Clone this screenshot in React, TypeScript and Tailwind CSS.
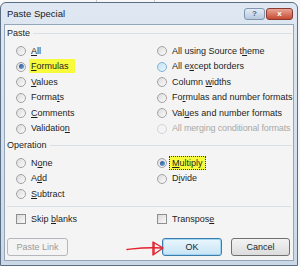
import type { ReactNode } from "react";

type Opt = {
    label: ReactNode;
    checked?: boolean;
    disabled?: boolean;
    hover?: boolean;
};

function Radio({ checked, disabled, hover }: { checked?: boolean; disabled?: boolean; hover?: boolean }) {
    const ring = disabled
        ? "border-[#d4d4d4] from-[#f4f4f4] to-[#f4f4f4]"
        : hover
          ? "border-[#7fb2d6] from-[#c4e2f5] to-[#eaf6fd]"
          : "border-[#a3a3a3] from-[#dcdcdc] to-[#fbfbfb]";
    return (
        <span
            className={`flex h-[10px] w-[10px] shrink-0 items-center justify-center rounded-full border bg-gradient-to-br ${ring}`}
        >
            {checked && (
                <span className="h-[5px] w-[5px] rounded-full bg-gradient-to-br from-[#1d4f8c] to-[#78aee2]" />
            )}
        </span>
    );
}

function Check() {
    return (
        <span className="h-[10px] w-[10px] shrink-0 border border-[#8f8f8f] bg-gradient-to-br from-[#d9d9d9] to-[#fafafa]" />
    );
}

function Row({ label, checked, disabled, hover }: Opt) {
    return (
        <div className="flex h-[15.5px] items-center gap-[5px] whitespace-nowrap">
            <Radio checked={checked} disabled={disabled} hover={hover} />
            <span className={disabled ? "tracking-[-0.15px] text-[#a9a9a9]" : "text-[#1e1e1e]"}>{label}</span>
        </div>
    );
}

function Header({ title }: { title: string }) {
    return (
        <div className="flex h-[14px] items-center gap-[3px] pl-[2px] pr-[1px]">
            <span className="text-[#1e1e1e]">{title}</span>
            <span className="h-px flex-1 bg-[#dadfe3]" />
        </div>
    );
}

const pasteLeft: Opt[] = [
    { label: <><u>A</u>ll</> },
    {
        label: (
            <span className="-ml-[2px] bg-[#f7fb3c] py-[2px] pl-[2px] pr-[6px]">
                <u>F</u>ormulas
            </span>
        ),
        checked: true,
    },
    { label: <><u>V</u>alues</> },
    { label: <>Forma<u>t</u>s</> },
    { label: <><u>C</u>omments</> },
    { label: <>Validatio<u>n</u></> },
];

const pasteRight: Opt[] = [
    { label: <>All using Source t<u>h</u>eme</> },
    { label: <>All e<u>x</u>cept borders</>, hover: true },
    { label: <>Column <u>w</u>idths</> },
    { label: <>Fo<u>r</u>mulas and number formats</> },
    { label: <>Val<u>u</u>es and number formats</> },
    { label: <>All mer<u>g</u>ing conditional formats</>, disabled: true },
];

const opLeft: Opt[] = [
    { label: <>N<u>o</u>ne</> },
    { label: <>A<u>d</u>d</> },
    { label: <><u>S</u>ubtract</> },
];

const opRight: Opt[] = [
    {
        label: (
            <span className="-ml-[3px] border border-dotted border-[#333] bg-[#f7fb3c] px-[2px] py-px">
                <u>M</u>ultiply
            </span>
        ),
        checked: true,
    },
    { label: <>D<u>i</u>vide</> },
];

export default function App() {
    return (
        <div className="relative h-[266px] w-[300px] overflow-hidden bg-[#f7f7f7] font-['Liberation_Sans',Arial,sans-serif] text-[9px] leading-none">
            {/* sheet behind the dialog */}
            <div className="flex h-[2px]">
                <div className="w-[97px] border-r border-[#c8c8c8]" />
                <div className="w-[58px] border-r border-[#c8c8c8]" />
            </div>

            <div className="flex h-[264px] w-[298px] flex-col rounded-t-[6px] border border-[#5b6e84] bg-gradient-to-b from-[#dfe8f2] to-[#cbd9e7]">
                {/* title bar */}
                <div className="flex h-[21px] shrink-0 items-center pl-[6px] pr-[4px]">
                    <span className="text-[9.5px] text-[#1b1b1b]">Paste Special</span>
                    <div className="ml-auto flex gap-[1px]">
                        <div className="flex h-[12px] w-[21px] items-center justify-center rounded-[3px] border border-[#8096ae] bg-gradient-to-b from-[#e3ecf6] to-[#b7c9dd] text-[8px] font-bold text-[#52687f]">
                            ?
                        </div>
                        <div className="flex h-[12px] w-[27px] items-center justify-center rounded-[3px] border border-[#8a3a32] bg-gradient-to-b from-[#e9a596] to-[#c4482f] text-[8px] font-bold text-white">
                            x
                        </div>
                    </div>
                </div>

                {/* client area */}
                <div className="mx-[3px] mb-[4px] flex flex-1 flex-col border border-[#93a6ba] bg-[#f4f4f4] pt-[1px]">
                    <Header title="Paste" />
                    <div className="mt-[3.25px] grid grid-cols-[141px_1fr] pl-[11px]">
                        <div>
                            {pasteLeft.map((o, i) => (
                                <Row key={i} {...o} />
                            ))}
                        </div>
                        <div>
                            {pasteRight.map((o, i) => (
                                <Row key={i} {...o} />
                            ))}
                        </div>
                    </div>

                    <div className="mt-[1.75px]">
                        <Header title="Operation" />
                    </div>
                    <div className="mt-[3.25px] grid grid-cols-[141px_1fr] pl-[11px]">
                        <div>
                            {opLeft.map((o, i) => (
                                <Row key={i} {...o} />
                            ))}
                        </div>
                        <div>
                            {opRight.map((o, i) => (
                                <Row key={i} {...o} />
                            ))}
                        </div>
                    </div>

                    <div className="mx-[2px] mt-[4px] h-px bg-[#dadfe3]" />

                    <div className="mt-[4.5px] grid grid-cols-[141px_1fr] pl-[11px]">
                        <div className="flex h-[15.5px] items-center gap-[5px]">
                            <Check />
                            <span className="text-[#1e1e1e]">
                                Skip <u>b</u>lanks
                            </span>
                        </div>
                        <div className="flex h-[15.5px] items-center gap-[5px]">
                            <Check />
                            <span className="text-[#1e1e1e]">
                                Transpos<u>e</u>
                            </span>
                        </div>
                    </div>

                    <div className="mt-[11.25px] flex pl-[2px] pr-[3px]">
                        <div className="flex h-[18px] w-[61px] items-center justify-center rounded-[3px] border border-[#b4b8bc] bg-[#f4f4f4] text-[#9a9a9a]">
                            Paste Link
                        </div>
                        <div className="ml-auto flex h-[18px] w-[60px] items-center justify-center rounded-[3px] border border-[#3d7bad] bg-gradient-to-b from-[#eaf6fd] to-[#c6e4f5] text-[#1e1e1e] shadow-[inset_0_0_0_1px_#9ed6f4]">
                            OK
                        </div>
                        <div className="ml-[9px] flex h-[18px] w-[59px] items-center justify-center rounded-[3px] border border-[#707070] bg-gradient-to-b from-[#f3f3f3] to-[#dcdcdc] text-[#1e1e1e]">
                            Cancel
                        </div>
                    </div>
                </div>
            </div>

            {/* red annotation arrow */}
            <svg
                className="absolute left-[120px] top-[236px]"
                width="46"
                height="22"
                viewBox="0 0 46 22"
                fill="none"
                stroke="#e3202b"
                strokeWidth="1.4"
                strokeLinecap="round"
                strokeLinejoin="round"
            >
                <path d="M7 13.5 C 16 12.5, 26 11, 42 12" />
                <path d="M33 6 L33 19 L43 12 Z" />
                <path d="M34 7.5 L34 17.5" />
            </svg>
        </div>
    );
}
